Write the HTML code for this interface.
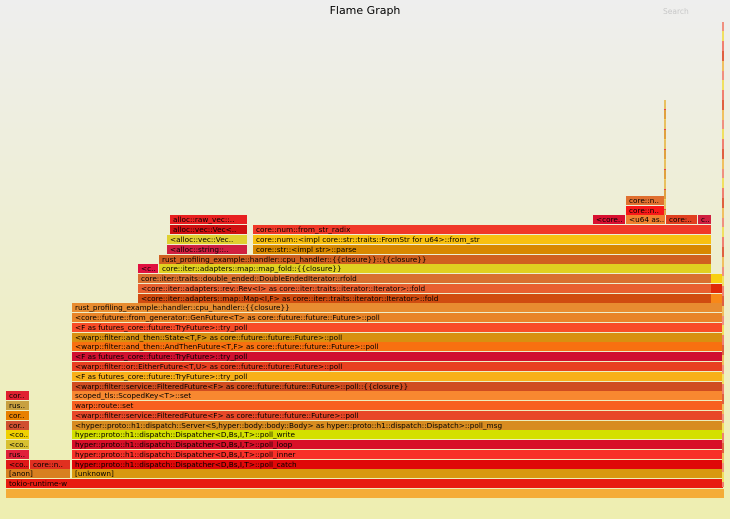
<!DOCTYPE html>
<html><head><meta charset="utf-8"><style>
html,body{margin:0;padding:0}
body{width:730px;height:519px;position:relative;overflow:hidden;background:linear-gradient(#eeeeee 0%,#eeeeb0 100%);font-family:"DejaVu Sans","Liberation Sans",sans-serif}
.t{position:absolute;top:4px;left:0;width:730px;text-align:center;font-size:11px;color:#000}
.s{position:absolute;top:7px;left:663px;font-size:7.5px;color:#c8c8c8}
.b{position:absolute;height:9px;top:calc(489px - var(--r)*9.77px);font-size:7.3px;line-height:9.5px;color:#000;white-space:nowrap;overflow:hidden;padding-left:3px;box-sizing:border-box}
.sp{position:absolute;width:2px}
</style></head><body>
<div class="t">Flame Graph</div>
<div class="s">Search</div>

<div class="b" style="--r:0;left:6px;width:718px;background:#f4ac38"></div>
<div class="b" style="--r:1;left:6px;width:717px;background:#e81c10">tokio-runtime-w</div>
<div class="b" style="--r:2;left:6px;width:64px;background:#d88020">[anon]</div>
<div class="b" style="--r:2;left:72px;width:651px;background:#d89810">[unknown]</div>
<div class="b" style="--r:3;left:6px;width:23px;background:#e01818">&lt;co..</div>
<div class="b" style="--r:3;left:30px;width:40px;background:#e03020">core::n..</div>
<div class="b" style="--r:3;left:72px;width:650px;background:#e00808">hyper::proto::h1::dispatch::Dispatcher&lt;D,Bs,I,T&gt;::poll_catch</div>
<div class="b" style="--r:4;left:6px;width:23px;background:#e0203a">rus..</div>
<div class="b" style="--r:4;left:72px;width:650px;background:#f83028">hyper::proto::h1::dispatch::Dispatcher&lt;D,Bs,I,T&gt;::poll_inner</div>
<div class="b" style="--r:5;left:6px;width:23px;background:#d8c030">&lt;co..</div>
<div class="b" style="--r:5;left:72px;width:650px;background:#d81028">hyper::proto::h1::dispatch::Dispatcher&lt;D,Bs,I,T&gt;::poll_loop</div>
<div class="b" style="--r:6;left:6px;width:23px;background:#f0d000">&lt;co..</div>
<div class="b" style="--r:6;left:72px;width:650px;background:#d4e000">hyper::proto::h1::dispatch::Dispatcher&lt;D,Bs,I,T&gt;::poll_write</div>
<div class="b" style="--r:7;left:6px;width:23px;background:#d05030">cor..</div>
<div class="b" style="--r:7;left:72px;width:650px;background:#d88c20">&lt;hyper::proto::h1::dispatch::Server&lt;S,hyper::body::body::Body&gt; as hyper::proto::h1::dispatch::Dispatch&gt;::poll_msg</div>
<div class="b" style="--r:8;left:6px;width:23px;background:#e88000">cor..</div>
<div class="b" style="--r:8;left:72px;width:650px;background:#e84828">&lt;warp::filter::service::FilteredFuture&lt;F&gt; as core::future::future::Future&gt;::poll</div>
<div class="b" style="--r:9;left:6px;width:23px;background:#c8a040">rus..</div>
<div class="b" style="--r:9;left:72px;width:650px;background:#f86020">warp::route::set</div>
<div class="b" style="--r:10;left:6px;width:23px;background:#e02030">cor..</div>
<div class="b" style="--r:10;left:72px;width:650px;background:#f88830">scoped_tls::ScopedKey&lt;T&gt;::set</div>
<div class="b" style="--r:11;left:72px;width:650px;background:#d04c20">&lt;warp::filter::service::FilteredFuture&lt;F&gt; as core::future::future::Future&gt;::poll::{{closure}}</div>
<div class="b" style="--r:12;left:72px;width:650px;background:#f8b018">&lt;F as futures_core::future::TryFuture&gt;::try_poll</div>
<div class="b" style="--r:13;left:72px;width:650px;background:#e84020">&lt;warp::filter::or::EitherFuture&lt;T,U&gt; as core::future::future::Future&gt;::poll</div>
<div class="b" style="--r:14;left:72px;width:650px;background:#d01030">&lt;F as futures_core::future::TryFuture&gt;::try_poll</div>
<div class="b" style="--r:15;left:72px;width:650px;background:#f87010">&lt;warp::filter::and_then::AndThenFuture&lt;T,F&gt; as core::future::future::Future&gt;::poll</div>
<div class="b" style="--r:16;left:72px;width:650px;background:#d89010">&lt;warp::filter::and_then::State&lt;T,F&gt; as core::future::future::Future&gt;::poll</div>
<div class="b" style="--r:17;left:72px;width:650px;background:#f84c28">&lt;F as futures_core::future::TryFuture&gt;::try_poll</div>
<div class="b" style="--r:18;left:72px;width:650px;background:#e88428">&lt;core::future::from_generator::GenFuture&lt;T&gt; as core::future::future::Future&gt;::poll</div>
<div class="b" style="--r:19;left:72px;width:650px;background:#e88c30">rust_profiling_example::handler::cpu_handler::{{closure}}</div>
<div class="b" style="--r:20;left:138px;width:573px;background:#d04c10">&lt;core::iter::adapters::map::Map&lt;I,F&gt; as core::iter::traits::iterator::Iterator&gt;::fold</div>
<div class="b" style="--r:20;left:711px;width:11px;background:#f88818"></div>
<div class="b" style="--r:21;left:138px;width:573px;background:#e86030">&lt;core::iter::adapters::rev::Rev&lt;I&gt; as core::iter::traits::iterator::Iterator&gt;::fold</div>
<div class="b" style="--r:21;left:711px;width:11px;background:#e02808"></div>
<div class="b" style="--r:22;left:138px;width:573px;background:#d87030">core::iter::traits::double_ended::DoubleEndedIterator::rfold</div>
<div class="b" style="--r:22;left:711px;width:11px;background:#f8d010"></div>
<div class="b" style="--r:23;left:138px;width:20px;background:#e01040">&lt;c..</div>
<div class="b" style="--r:23;left:159px;width:552px;background:#e0d020">core::iter::adapters::map::map_fold::{{closure}}</div>
<div class="b" style="--r:24;left:159px;width:552px;background:#d06020">rust_profiling_example::handler::cpu_handler::{{closure}}::{{closure}}</div>
<div class="b" style="--r:25;left:167px;width:80px;background:#d02040">&lt;alloc::string::..</div>
<div class="b" style="--r:25;left:253px;width:458px;background:#d88800">core::str::&lt;impl str&gt;::parse</div>
<div class="b" style="--r:26;left:167px;width:80px;background:#e0d030">&lt;alloc::vec::Vec..</div>
<div class="b" style="--r:26;left:253px;width:458px;background:#f8c010">core::num::&lt;impl core::str::traits::FromStr for u64&gt;::from_str</div>
<div class="b" style="--r:27;left:170px;width:77px;background:#d01010">alloc::vec::Vec&lt;..</div>
<div class="b" style="--r:27;left:253px;width:458px;background:#f03828">core::num::from_str_radix</div>
<div class="b" style="--r:28;left:170px;width:77px;background:#e82020">alloc::raw_vec::..</div>
<div class="b" style="--r:28;left:593px;width:32px;background:#d81030">&lt;core..</div>
<div class="b" style="--r:28;left:626px;width:39px;background:#f08030">&lt;u64 as..</div>
<div class="b" style="--r:28;left:666px;width:31px;background:#e04020">core:..</div>
<div class="b" style="--r:28;left:698px;width:13px;background:#d02040">c..</div>
<div class="b" style="--r:29;left:626px;width:39px;background:#f81818">core::n..</div>
<div class="b" style="--r:30;left:626px;width:39px;background:#e07030">core::n..</div>

<div class="sp" style="left:664px;top:100px;height:115px;background:repeating-linear-gradient(#e8c060 0 9px,#e84050 9px 10px,#e0a040 10px 19px,#f0d060 19px 20px)"></div>
<div class="sp" style="left:722px;top:22px;height:465px;background:repeating-linear-gradient(#f09080 0 9px,#f0e060 9px 19px,#f08070 19px 29px,#e06040 29px 39px,#f0c060 39px 49px)"></div>
</body></html>
